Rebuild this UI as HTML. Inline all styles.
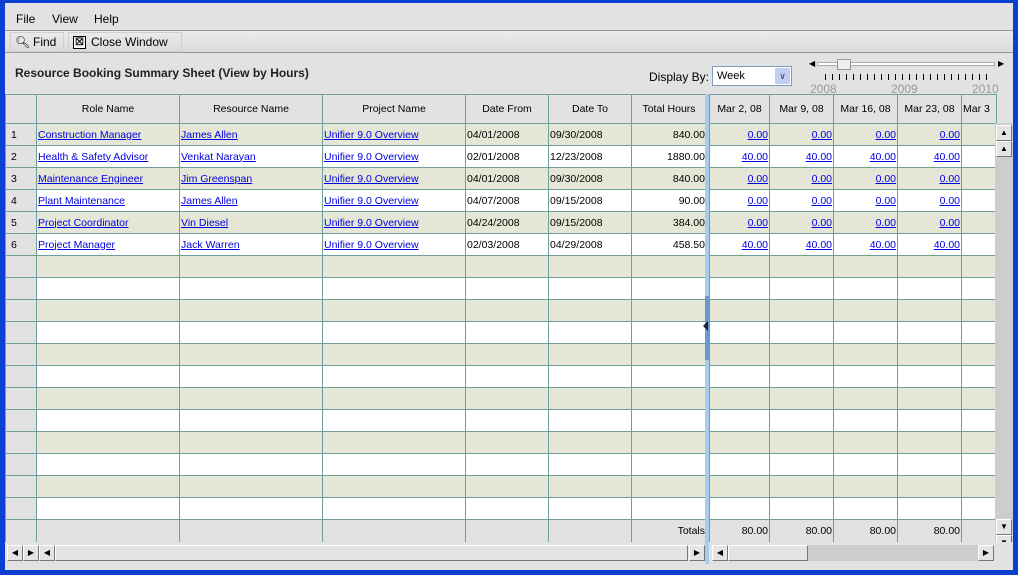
<!DOCTYPE html><html><head><style>
*{margin:0;padding:0;box-sizing:border-box}
body{width:1018px;height:575px;overflow:hidden;background:#0a3fcf;font-family:"Liberation Sans",sans-serif;font-size:11px;color:#000;position:relative}
.win{position:absolute;left:5px;top:3px;width:1008px;height:567px;background:#e2e2e2}
.a{position:absolute}
table{border-collapse:collapse;table-layout:fixed;position:absolute}
td{border:1px solid #6e9e9e;height:22px;padding:0 1px;white-space:nowrap;overflow:hidden;font-size:10.5px}
tr.h td{height:29px;background:#e2e2e2;text-align:center}
tr.b td{background:#e6e6d6}
tr.w td{background:#fff}
tr.t td{background:#e2e2e2;height:23px}
td.n{background:#e2e2e2!important;padding-left:5px}
a{color:#0000e0;text-decoration:underline}
.r{text-align:right}
.btn{position:absolute;width:16px;height:16px;background:#e4e4e4;border:1px solid;border-color:#fff #777 #777 #fff;font-size:8px;text-align:center;line-height:14px}
</style></head><body>
<div class="win">
<div class="a" style="left:0;top:0;width:1008px;height:28px;border-bottom:1px solid #999"></div>
<div class="a" style="left:11px;top:9px;font-size:12px">File</div>
<div class="a" style="left:47px;top:9px;font-size:12px">View</div>
<div class="a" style="left:89px;top:9px;font-size:12px">Help</div>
<div class="a" style="left:0;top:28px;width:1008px;height:22px;background:linear-gradient(#ececec,#dadada);border-bottom:1px solid #999"></div>
<div class="a" style="left:5px;top:29px;width:54px;height:20px;border:1px solid #d0d0d0"></div>
<div class="a" style="left:10px;top:32px;font-size:12px">&#x1F50D;&#xFE0E;</div>
<div class="a" style="left:28px;top:32px;font-size:12px">Find</div>
<div class="a" style="left:63px;top:29px;width:114px;height:20px;border:1px solid #d0d0d0"></div>
<div class="a" style="left:68px;top:33px;width:13px;height:13px;border:1px solid #000;background:#fff;font-size:10px;line-height:11px;text-align:center;font-weight:bold">&#x2612;</div>
<div class="a" style="left:86px;top:32px;font-size:12px">Close Window</div>
<div class="a" style="left:10px;top:63px;font-size:12px;font-weight:bold;color:#222">Resource Booking Summary Sheet (View by Hours)</div>
<div class="a" style="left:644px;top:67px;font-size:12px">Display By:</div>
<div class="a" style="left:707px;top:63px;width:80px;height:20px;border:1px solid #7f9db9;background:#fff;padding:3px 4px;font-size:11px">Week</div>
<div class="a" style="left:770px;top:65px;width:15px;height:16px;background:#c2cff5;color:#335;font-size:9px;text-align:center;line-height:16px">&#x2228;</div>
<div class="a" style="left:804px;top:56px;font-size:8px">&#9664;</div>
<div class="a" style="left:993px;top:56px;font-size:8px">&#9654;</div>
<div class="a" style="left:812px;top:59px;width:178px;height:4px;border:1px solid #aaa;background:#fff"></div>
<div class="a" style="left:832px;top:56px;width:14px;height:11px;background:#eee;border:1px solid #999"></div>
<div class="a" style="left:820px;top:71px;width:165px;height:6px;background:repeating-linear-gradient(90deg,#000 0 1px,transparent 1px 7px)"></div>
<div class="a" style="left:805px;top:79px;font-size:12px;color:#999">2008</div>
<div class="a" style="left:886px;top:79px;font-size:12px;color:#999">2009</div>
<div class="a" style="left:967px;top:79px;font-size:12px;color:#999">2010</div>

<table style="left:0;top:91px;width:701px">
<colgroup><col style="width:31px"><col style="width:143px"><col style="width:143px"><col style="width:143px"><col style="width:83px"><col style="width:83px"><col style="width:75px"></colgroup>
<tr class="h"><td></td><td>Role Name</td><td>Resource Name</td><td>Project Name</td><td>Date From</td><td>Date To</td><td>Total Hours</td></tr>
<tr class="b"><td class="n">1</td><td><a>Construction Manager</a></td><td><a>James Allen</a></td><td><a>Unifier 9.0 Overview</a></td><td>04/01/2008</td><td>09/30/2008</td><td class="r">840.00</td></tr>
<tr class="w"><td class="n">2</td><td><a>Health &amp; Safety Advisor</a></td><td><a>Venkat Narayan</a></td><td><a>Unifier 9.0 Overview</a></td><td>02/01/2008</td><td>12/23/2008</td><td class="r">1880.00</td></tr>
<tr class="b"><td class="n">3</td><td><a>Maintenance Engineer</a></td><td><a>Jim Greenspan</a></td><td><a>Unifier 9.0 Overview</a></td><td>04/01/2008</td><td>09/30/2008</td><td class="r">840.00</td></tr>
<tr class="w"><td class="n">4</td><td><a>Plant Maintenance</a></td><td><a>James Allen</a></td><td><a>Unifier 9.0 Overview</a></td><td>04/07/2008</td><td>09/15/2008</td><td class="r">90.00</td></tr>
<tr class="b"><td class="n">5</td><td><a>Project Coordinator</a></td><td><a>Vin Diesel</a></td><td><a>Unifier 9.0 Overview</a></td><td>04/24/2008</td><td>09/15/2008</td><td class="r">384.00</td></tr>
<tr class="w"><td class="n">6</td><td><a>Project Manager</a></td><td><a>Jack Warren</a></td><td><a>Unifier 9.0 Overview</a></td><td>02/03/2008</td><td>04/29/2008</td><td class="r">458.50</td></tr>
<tr class="b"><td class="n"></td><td></td><td></td><td></td><td></td><td></td><td></td></tr>
<tr class="w"><td class="n"></td><td></td><td></td><td></td><td></td><td></td><td></td></tr>
<tr class="b"><td class="n"></td><td></td><td></td><td></td><td></td><td></td><td></td></tr>
<tr class="w"><td class="n"></td><td></td><td></td><td></td><td></td><td></td><td></td></tr>
<tr class="b"><td class="n"></td><td></td><td></td><td></td><td></td><td></td><td></td></tr>
<tr class="w"><td class="n"></td><td></td><td></td><td></td><td></td><td></td><td></td></tr>
<tr class="b"><td class="n"></td><td></td><td></td><td></td><td></td><td></td><td></td></tr>
<tr class="w"><td class="n"></td><td></td><td></td><td></td><td></td><td></td><td></td></tr>
<tr class="b"><td class="n"></td><td></td><td></td><td></td><td></td><td></td><td></td></tr>
<tr class="w"><td class="n"></td><td></td><td></td><td></td><td></td><td></td><td></td></tr>
<tr class="b"><td class="n"></td><td></td><td></td><td></td><td></td><td></td><td></td></tr>
<tr class="w"><td class="n"></td><td></td><td></td><td></td><td></td><td></td><td></td></tr>
<tr class="t"><td></td><td></td><td></td><td></td><td></td><td></td><td class="r">Totals</td></tr>
</table>

<div class="a" style="left:700px;top:91px;width:4px;height:448px;background:#a9cbee"></div>
<div class="a" style="left:700px;top:293px;width:4px;height:64px;background:#6a9bd0"></div>
<div class="a" style="left:698px;top:318px;width:0;height:0;border:5px solid transparent;border-right-color:#223;border-left:0"></div>

<table style="left:704px;top:91px;width:287px">
<colgroup><col style="width:60px"><col style="width:64px"><col style="width:64px"><col style="width:64px"><col style="width:35px"></colgroup>
<tr class="h"><td>Mar 2, 08</td><td>Mar 9, 08</td><td>Mar 16, 08</td><td>Mar 23, 08</td><td style="text-align:left">Mar 3</td></tr>
<tr class="b"><td class="r"><a>0.00</a></td><td class="r"><a>0.00</a></td><td class="r"><a>0.00</a></td><td class="r"><a>0.00</a></td><td></td></tr>
<tr class="w"><td class="r"><a>40.00</a></td><td class="r"><a>40.00</a></td><td class="r"><a>40.00</a></td><td class="r"><a>40.00</a></td><td></td></tr>
<tr class="b"><td class="r"><a>0.00</a></td><td class="r"><a>0.00</a></td><td class="r"><a>0.00</a></td><td class="r"><a>0.00</a></td><td></td></tr>
<tr class="w"><td class="r"><a>0.00</a></td><td class="r"><a>0.00</a></td><td class="r"><a>0.00</a></td><td class="r"><a>0.00</a></td><td></td></tr>
<tr class="b"><td class="r"><a>0.00</a></td><td class="r"><a>0.00</a></td><td class="r"><a>0.00</a></td><td class="r"><a>0.00</a></td><td></td></tr>
<tr class="w"><td class="r"><a>40.00</a></td><td class="r"><a>40.00</a></td><td class="r"><a>40.00</a></td><td class="r"><a>40.00</a></td><td></td></tr>
<tr class="b"><td></td><td></td><td></td><td></td><td></td></tr>
<tr class="w"><td></td><td></td><td></td><td></td><td></td></tr>
<tr class="b"><td></td><td></td><td></td><td></td><td></td></tr>
<tr class="w"><td></td><td></td><td></td><td></td><td></td></tr>
<tr class="b"><td></td><td></td><td></td><td></td><td></td></tr>
<tr class="w"><td></td><td></td><td></td><td></td><td></td></tr>
<tr class="b"><td></td><td></td><td></td><td></td><td></td></tr>
<tr class="w"><td></td><td></td><td></td><td></td><td></td></tr>
<tr class="b"><td></td><td></td><td></td><td></td><td></td></tr>
<tr class="w"><td></td><td></td><td></td><td></td><td></td></tr>
<tr class="b"><td></td><td></td><td></td><td></td><td></td></tr>
<tr class="w"><td></td><td></td><td></td><td></td><td></td></tr>
<tr class="t"><td class="r">80.00</td><td class="r">80.00</td><td class="r">80.00</td><td class="r">80.00</td><td></td></tr>
</table>

<div class="a" style="left:990px;top:120px;width:18px;height:420px;background:#cdcdcd"></div>
<div class="btn" style="left:991px;top:122px">&#9650;</div>
<div class="btn" style="left:991px;top:138px">&#9650;</div>
<div class="btn" style="left:991px;top:516px">&#9660;</div>
<div class="btn" style="left:991px;top:532px">&#9660;</div>

<div class="a" style="left:0;top:539px;width:1008px;height:22px;background:#e2e2e2"></div>
<div class="btn" style="left:2px;top:542px">&#9664;</div>
<div class="btn" style="left:18px;top:542px">&#9654;</div>
<div class="btn" style="left:34px;top:542px">&#9664;</div>
<div class="a" style="left:50px;top:542px;width:633px;height:16px;background:#e4e4e4;border:1px solid;border-color:#fff #777 #777 #fff"></div>
<div class="btn" style="left:684px;top:542px">&#9654;</div>
<div class="a" style="left:700px;top:539px;width:4px;height:22px;background:#a9cbee"></div>
<div class="btn" style="left:707px;top:542px">&#9664;</div>
<div class="a" style="left:723px;top:542px;width:80px;height:16px;background:#e4e4e4;border:1px solid;border-color:#fff #777 #777 #fff"></div>
<div class="a" style="left:803px;top:542px;width:174px;height:16px;background:#cdcdcd"></div>
<div class="btn" style="left:973px;top:542px">&#9654;</div>
</div>
</body></html>
